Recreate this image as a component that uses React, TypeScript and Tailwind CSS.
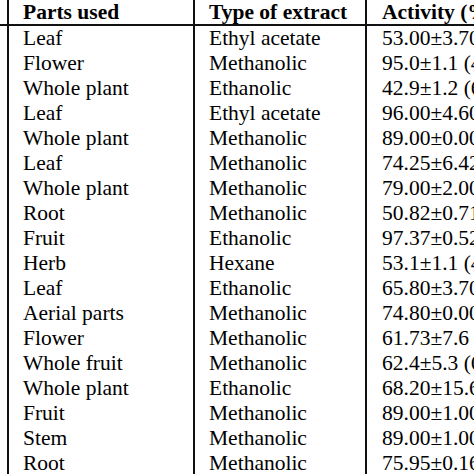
import React from "react";

const rows: [string, string, string][] = [
  ["Leaf", "Ethyl acetate", "53.00±3.70 (1 mg/mL)"],
  ["Flower", "Methanolic", "95.0±1.1 (400 µg/mL)"],
  ["Whole plant", "Ethanolic", "42.9±1.2 (60 µg/mL)"],
  ["Leaf", "Ethyl acetate", "96.00±4.60 (1 mg/mL)"],
  ["Whole plant", "Methanolic", "89.00±0.00 (1 mg/mL)"],
  ["Leaf", "Methanolic", "74.25±6.42 (1 mg/mL)"],
  ["Whole plant", "Methanolic", "79.00±2.00 (1 mg/mL)"],
  ["Root", "Methanolic", "50.82±0.71 (1 mg/mL)"],
  ["Fruit", "Ethanolic", "97.37±0.52 (1 mg/mL)"],
  ["Herb", "Hexane", "53.1±1.1 (400 µg/mL)"],
  ["Leaf", "Ethanolic", "65.80±3.70 (1 mg/mL)"],
  ["Aerial parts", "Methanolic", "74.80±0.00 (1 mg/mL)"],
  ["Flower", "Methanolic", "61.73±7.6 (1 mg/mL)"],
  ["Whole fruit", "Methanolic", "62.4±5.3 (600 µg/mL)"],
  ["Whole plant", "Ethanolic", "68.20±15.60 (1 mg/mL)"],
  ["Fruit", "Methanolic", "89.00±1.00 (1 mg/mL)"],
  ["Stem", "Methanolic", "89.00±1.00 (1 mg/mL)"],
  ["Root", "Methanolic", "75.95±0.16 (1 mg/mL)"],
];

export default function App() {
  return (
    <div
      className="w-[474px] h-[474px] overflow-hidden bg-white text-black"
      style={{ fontFamily: '"Liberation Serif", "Times New Roman", serif' }}
    >
      <div className="w-[665px] text-[21.5px]">
        <div className="grid grid-cols-[7px_186px_172px_300px] h-[26px] border-b-2 border-[#111]">
          <div />
          <div className="border-l-2 border-[#111] pl-[14px] font-bold leading-[24px] whitespace-nowrap">
            Parts used
          </div>
          <div className="border-l-2 border-[#111] pl-[14px] font-bold leading-[24px] whitespace-nowrap">
            Type of extract
          </div>
          <div className="border-l-2 border-[#111] pl-[15px] font-bold leading-[24px] whitespace-nowrap">
            Activity (%)
          </div>
        </div>
        {rows.map(([a, b, c], i) => (
          <div key={i} className="grid grid-cols-[7px_186px_172px_300px] h-[25px]">
            <div />
            <div className="border-l-2 border-[#111] pl-[14px] leading-[25px] whitespace-nowrap">{a}</div>
            <div className="border-l-2 border-[#111] pl-[14px] leading-[25px] whitespace-nowrap">{b}</div>
            <div className="border-l-2 border-[#111] pl-[15px] leading-[25px] whitespace-nowrap">{c}</div>
          </div>
        ))}
      </div>
    </div>
  );
}
